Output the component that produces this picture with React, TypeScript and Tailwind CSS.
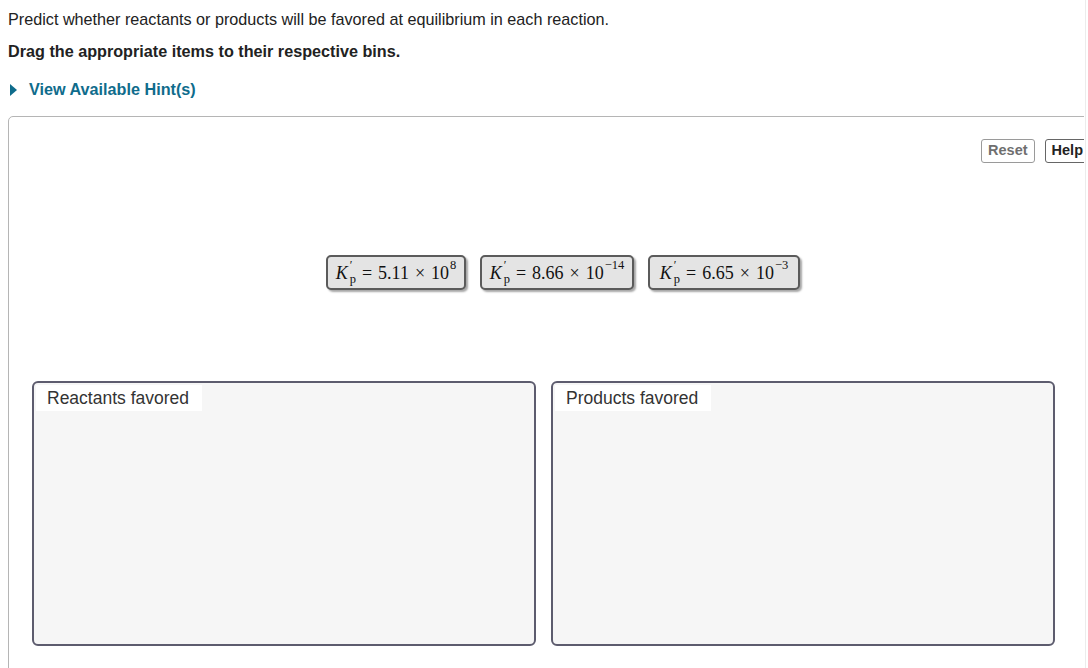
import React from 'react'

type Chip = { mant: string; exp: string; w: string }

const chips: Chip[] = [
  { mant: '5.11', exp: '8', w: 'w-[140px]' },
  { mant: '8.66', exp: '−14', w: 'w-[154px]' },
  { mant: '6.65', exp: '−3', w: 'w-[152px]' },
]

function KpChip({ mant, exp, w }: Chip) {
  return (
    <div
      className={`${w} flex h-[35px] items-center justify-center rounded-[5px] border-2 border-[#5b5b5b] bg-[#e4e4e4] text-[18px] leading-none text-[#111] shadow-[2px_2px_2px_rgba(0,0,0,0.35)]`}
      style={{ fontFamily: '"Liberation Serif", "DejaVu Serif", serif' }}
    >
      <span className="italic pr-[2px]">K</span>
      <span className="relative -top-[1px] inline-flex flex-col">
        <span className="h-[14px] text-[12px] leading-[14px]">′</span>
        <span className="h-[14px] text-[12.5px] leading-[14px]">p</span>
      </span>
      <span className="mx-[6px]">=</span>
      <span>{mant}</span>
      <span className="mx-[6px]">×</span>
      <span>10</span>
      <span className="relative -top-[7px] ml-[1px] text-[12.5px]">{exp}</span>
    </div>
  )
}

function Bin({ label }: { label: string }) {
  return (
    <div className="h-[265px] w-[504px] rounded-[6px] border-2 border-[#5d5c6e] bg-[#f6f6f6] p-[2px]">
      <div className="inline-block bg-white pl-[11px] pr-[13px] py-[3px] text-[17.5px] leading-[20px] text-[#333]">
        {label}
      </div>
    </div>
  )
}

export default function App() {
  return (
    <div
      className="relative h-[668px] w-[1088px] overflow-hidden bg-white"
      style={{ fontFamily: '"Liberation Sans", Arial, sans-serif' }}
    >
      <div className="h-[668px] w-[1084px] overflow-hidden">
        <p className="pl-[8px] pt-[10px] text-[16.2px] leading-[19px] text-[#222]">
          Predict whether reactants or products will be favored at equilibrium in each reaction.
        </p>
        <p className="pl-[8px] pt-[13px] text-[16.2px] font-bold leading-[19px] text-[#222]">
          Drag the appropriate items to their respective bins.
        </p>
        <div className="flex items-center pl-[10px] pt-[19px] text-[16.2px] font-bold leading-[19px] text-[#0f6c8c]">
          <svg width="8" height="12" viewBox="0 0 8 12" className="mr-[11px]">
            <path d="M0 0 L7 6 L0 12 Z" fill="#0f6c8c" />
          </svg>
          View Available Hint(s)
        </div>

        <div className="ml-[8px] mt-[17px] h-[600px] w-[1090px] rounded-tl-[5px] border border-[#b5b5b5]">
          <div className="flex justify-end gap-[10px] pr-[7px] pt-[22px]">
            <button className="h-[24px] rounded-[3px] border border-[#9a9a9a] bg-white px-[6px] text-[14.5px] font-bold text-[#6f6f6f]">
              Reset
            </button>
            <button className="h-[24px] rounded-[3px] border border-[#666] bg-white px-[6px] text-[14.5px] font-bold text-[#222]">
              Help
            </button>
          </div>

          <div className="mt-[92px] flex gap-[14px] pl-[317px]">
            {chips.map((c) => (
              <KpChip key={c.mant} {...c} />
            ))}
          </div>

          <div className="mt-[91px] flex gap-[15px] pl-[23px]">
            <Bin label="Reactants favored" />
            <Bin label="Products favored" />
          </div>
        </div>
      </div>
      <div className="absolute right-[2px] top-0 h-[668px] w-[1px] bg-[#ececec]" />
    </div>
  )
}
